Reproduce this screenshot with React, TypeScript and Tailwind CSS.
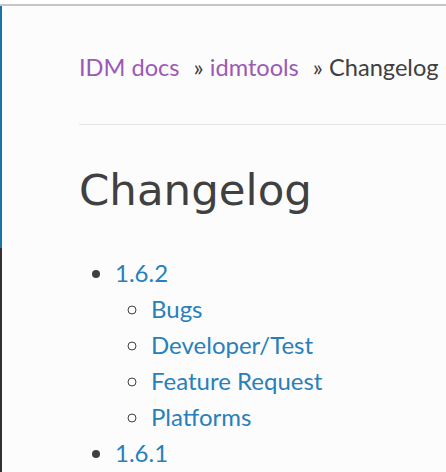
import React from "react";

export default function App() {
  const sub = ["Bugs", "Developer/Test", "Feature Request", "Platforms"];
  return (
    <div className="w-[446px] h-[472px] overflow-hidden bg-white" style={{ fontFamily: "Lato, 'Liberation Sans', sans-serif" }}>
      <div className="h-[4px] bg-white" />
      <div className="h-[2px] bg-[#c6c6c6]" />
      <div className="flex h-[466px]">
        <div className="w-[2px] flex flex-col shrink-0">
          <div className="h-[242px] bg-[#1a73a8]" />
          <div className="flex-1 bg-[#343131]" />
        </div>
        <div className="flex-1 bg-[#fcfcfc] pl-[77px]">
          <div className="pt-[46px] h-[118px] text-[23.6px] leading-[30px] text-[#404040] whitespace-nowrap">
            <span className="text-[#9b59b6]">IDM docs</span>
            <span className="ml-[14px]">»</span>{" "}
            <span className="text-[#9b59b6]">idmtools</span>
            <span className="ml-[14px]">»</span> Changelog
          </div>
          <div className="h-px bg-[#e1e4e5]" />
          <h1
            className="mt-[39px] text-[43.5px] leading-[52px] text-[#404040] font-normal"
            style={{ fontFamily: "'DejaVu Sans', sans-serif" }}
          >
            Changelog
          </h1>
          <ul className="mt-[39px] list-disc pl-[36px] text-[24px] leading-[36px] text-[#2980b9] marker:text-[#404040]">
            <li>
              <span>1.6.2</span>
              <ul className="list-[circle] pl-[36px]">
                {sub.map((s) => (
                  <li key={s}>{s}</li>
                ))}
              </ul>
            </li>
            <li>1.6.1</li>
          </ul>
        </div>
      </div>
    </div>
  );
}
